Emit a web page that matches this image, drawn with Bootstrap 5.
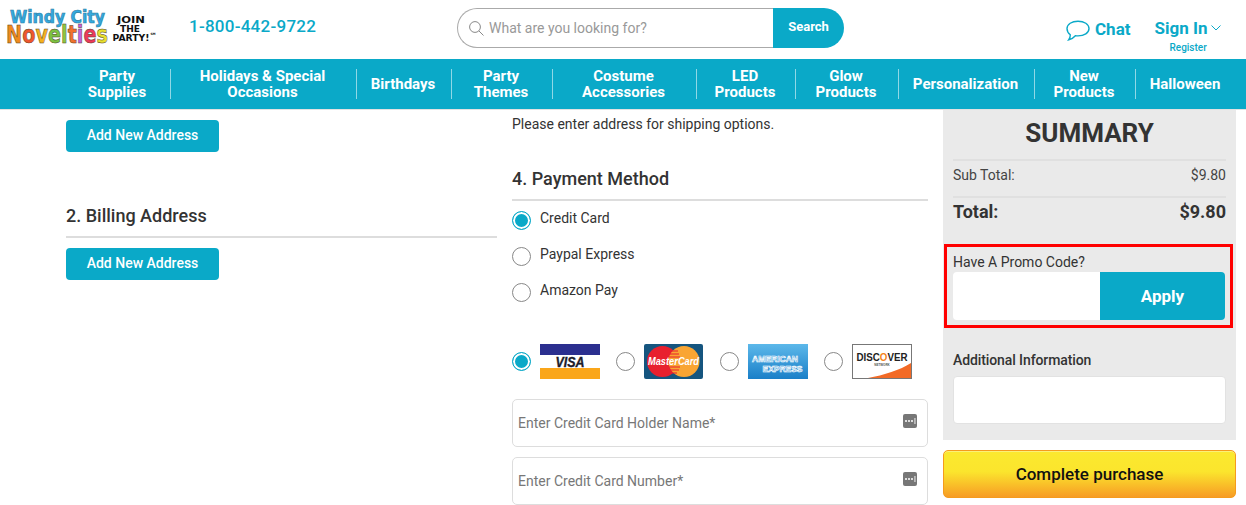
<!DOCTYPE html>
<html lang="en">
<head>
  <meta charset="UTF-8">
  <meta name="viewport" content="width=device-width, initial-scale=1">
  <title>Checkout - Windy City Novelties</title>
  <link href="https://cdn.jsdelivr.net/npm/bootstrap@5.3.0/dist/css/bootstrap.min.css" rel="stylesheet">
  <style>
    html, body { height: 505px; overflow: hidden; }
    body { font-family: Roboto, "Liberation Sans", sans-serif; font-size: 14px; color: #333; background: #fff; }
    .site-top { height: 59px; }
    .brand-logo { margin: -5px 0 0 5px; width: 153px; height: 46px; flex: none; overflow: visible; }
    .phone-link { margin: -6px 0 0 31px; width: 268px; font-size: 17px; font-weight: 500; color: #0aa9c8; text-decoration: none; letter-spacing: .25px; }
    .search-box { width: 387px; height: 40px; flex: none; margin-top: -3px; }
    .search-field { flex: 1; min-width: 0; height: 40px; border: 1px solid #aaa; border-right: 0; border-radius: 20px 0 0 20px; }
    .search-field svg { margin: 0 3px 0 11px; flex: none; }
    .search-field input { border: 0; outline: 0; min-width: 0; flex: 1; font-size: 14px; color: #555; background: transparent; }
    .search-field input::placeholder { color: #999; opacity: 1; }
    .search-go { width: 71px; height: 40px; background: #0aa9c8; color: #fff; font-size: 13px; font-weight: 700; border: 0; border-radius: 0 20px 20px 0; flex: none; padding: 0 0 2px 0; }
    .chat-link { margin-left: 222px; color: #0aa9c8; font-size: 17px; font-weight: 700; text-decoration: none; gap: 5px; margin-top: 1px; }
    .sign-wrap { margin-left: 24px; color: #0aa9c8; margin-top: 13px; width: 70px; }
    .sign-link { font-size: 17px; font-weight: 700; color: #0aa9c8; text-decoration: none; line-height: 20px; gap: 4px; }
    .register-link { display: block; font-size: 10px; font-weight: 500; color: #0aa9c8; text-decoration: none; margin: 4px 0 0 15px; line-height: 12px; }

    .main-nav { height: 50px; background: #0aa9c8; padding: 10px 10px 10px 66px; border-bottom: 0; }
    .main-nav a { display: flex; align-items: center; justify-content: center; text-align: center; height: 30px; padding-right: 2px; color: #fff; font-size: 15px; font-weight: 700; line-height: 16px; text-decoration: none; border-right: 1px solid rgba(255,255,255,.55); }
    .main-nav a:last-child { border-right: 0; }
    .main-nav a:nth-child(1) { width: 105px; }
    .main-nav a:nth-child(2) { width: 186px; }
    .main-nav a:nth-child(3) { width: 95px; }
    .main-nav a:nth-child(4) { width: 101px; }
    .main-nav a:nth-child(5) { width: 144px; }
    .main-nav a:nth-child(6) { width: 99px; }
    .main-nav a:nth-child(7) { width: 103px; }
    .main-nav a:nth-child(8) { width: 136px; }
    .main-nav a:nth-child(9) { width: 101px; }
    .main-nav a:nth-child(10) { width: 100px; }

    .page-body { border-top: 1px solid #e2e2e2; padding-left: 66px; }
    .col-address { width: 431px; padding-top: 10px; flex: none; }
    .col-payment { width: 416px; margin-left: 15px; flex: none; padding-top: 4px; }
    .col-summary { width: 293px; margin-left: 15px; flex: none; }

    .add-btn { display: block; width: 153px; height: 32px; padding: 0 0 1px; background: #0aa9c8; border: 0; border-radius: 4px; color: #fff; font-size: 14px; font-weight: 500; }
    .step-head { font-size: 18px; font-weight: 500; color: #333; line-height: 22px; margin: 0; padding-bottom: 9px; border-bottom: 2px solid #ddd; }
    .billing-head { margin-top: 53px; margin-bottom: 10px; }
    .intro-line { line-height: 20px; margin: 0 0 34px; }
    .pay-head { padding-bottom: 9px; }

    .pay-radio { appearance: none; width: 19px; height: 19px; margin: 0; flex: none; border: 1px solid #888; border-radius: 50%; background: #fff; }
    .pay-radio:checked { background: #0aa9c8; border-color: #0aa9c8; box-shadow: inset 0 0 0 2px #fff; }
    .pay-row { height: 36px; gap: 9px; }
    .pay-row label { line-height: 18px; margin-top: -5px; }
    .pay-row:first-of-type { margin-top: 1px; }
    .card-pick { margin-top: 34px; height: 35px; }
    .card-pick > div { width: 104px; gap: 9px; }
    .card-pick svg { display: block; flex: none; }
    .card-field { margin-top: 10px; height: 48px; }
    .card-field.first-field { margin-top: 20px; }
    .card-field input { width: 100%; height: 48px; border: 1px solid #ddd; border-radius: 5px; padding: 0 5px; font-size: 14px; color: #555; outline: 0; }
    .card-field input::placeholder { color: #777; opacity: 1; }
    .card-field svg { position: absolute; top: 15px; right: 11px; }

    .summary-panel { height: 330px; background: #eaeaea; padding: 0 10px; }
    .summary-title { font-size: 26px; font-weight: 700; line-height: 30px; text-align: center; margin: 0; padding: 8px 0 11px; color: #333; border-bottom: 2px solid #e0e0e0; }
    .sub-line { height: 37px; border-bottom: 2px solid #e0e0e0; font-size: 14px; padding-bottom: 7px; color: #444; }
    .total-line { height: 24px; font-size: 18px; font-weight: 700; margin-bottom: 0; padding-top: 3px; }
    .promo-box { margin: 22px -7px 0 -9px; height: 84px; border: 3px solid #f00; padding: 6px 5px 0 6px; }
    .promo-box label { line-height: 18px; display: block; margin-bottom: 1px; }
    .promo-input { width: 147px; height: 48px; background: #fff; border: 0; border-radius: 4px 0 0 4px; outline: 0; }
    .promo-apply { width: 125px; height: 48px; padding: 1px 0 0; background: #0aa9c8; border: 0; border-radius: 0 4px 4px 0; color: #fff; font-size: 17px; font-weight: 700; }
    .extra-label { font-weight: 500; line-height: 18px; display: block; margin: 23px 0 7px; letter-spacing: -.1px; }
    .extra-input { display: block; width: 100%; height: 48px; background: #fff; border: 1px solid #e2e2e2; border-radius: 4px; outline: 0; resize: none; }
    .buy-btn { display: block; width: 100%; height: 48px; margin-top: 10px; padding: 2px 0 0; border: 1px solid #f59b1d; border-radius: 5px; background: linear-gradient(#fbe92f 0%, #fbe52d 45%, #f79c25 100%); box-shadow: inset 0 1px 0 rgba(255,255,255,.35); color: #111; font-size: 17px; font-weight: 500; }
  </style>
</head>
<body>

<header class="site-top d-flex align-items-center">
  <svg class="brand-logo" viewBox="0 0 153 46" aria-label="Windy City Novelties">
    <g font-family="'DejaVu Sans', sans-serif" font-weight="700">
      <text x="5" y="19" font-size="18" textLength="95" lengthAdjust="spacingAndGlyphs" fill="#33aadf" stroke="#2f7fa6" stroke-width=".7">Windy City</text>
      <text x="1" y="39" font-size="25" textLength="102" lengthAdjust="spacingAndGlyphs" stroke="#4a3a20" stroke-width=".5"><tspan fill="#f08a1c">N</tspan><tspan fill="#f0562e">o</tspan><tspan fill="#f5b01f">v</tspan><tspan fill="#7cc242">e</tspan><tspan fill="#8fc63e">l</tspan><tspan fill="#f0712e">t</tspan><tspan fill="#c45fe0">i</tspan><tspan fill="#ee3a5c">e</tspan><tspan fill="#e8e030">s</tspan></text>
    </g>
    <g font-family="'DejaVu Sans', sans-serif" font-weight="700" font-size="9" fill="#111" text-anchor="middle">
      <text x="126" y="19" textLength="28" lengthAdjust="spacingAndGlyphs">JOIN</text>
      <text x="125" y="28" textLength="20" lengthAdjust="spacingAndGlyphs">THE</text>
      <text x="126" y="37" textLength="37" lengthAdjust="spacingAndGlyphs">PARTY!</text>
      <text x="148" y="31" font-size="3">SM</text>
    </g>
  </svg>
  <a class="phone-link" href="#">1-800-442-9722</a>
  <div class="search-box d-flex">
    <div class="search-field d-flex align-items-center">
      <svg width="15" height="15" viewBox="0 0 15 15" fill="none" stroke="#888" stroke-width="1"><circle cx="6" cy="6" r="5.400"/><path d="M9.900 9.900 14.500 14.500"/></svg>
      <input type="text" placeholder="What are you looking for?">
    </div>
    <button class="search-go" type="button">Search</button>
  </div>
  <a class="chat-link d-flex align-items-center" href="#">
    <svg width="24" height="21" viewBox="0 0 24 21" fill="none" stroke="#0aa9c8" stroke-width="1.4"><path d="M12 1.200c6.200 0 11 3 11 7.400 0 4.300-4.800 7.300-11 7.300-.9 0-1.800-.1-2.600-.2C8 17.300 5.900 19 2.800 19.800c1-1.300 1.500-3 1.500-5C2.200 13.300 1 11.100 1 8.600 1 4.200 5.800 1.200 12 1.200z"/></svg>
    Chat
  </a>
  <div class="sign-wrap">
    <a class="sign-link d-flex align-items-center text-nowrap" href="#">Sign In
      <svg width="10" height="6" viewBox="0 0 10 6" fill="none" stroke="#0aa9c8" stroke-width="1"><path d="M.5.5 5 5 9.500.5"/></svg>
    </a>
    <a class="register-link" href="#">Register</a>
  </div>
</header>

<nav class="main-nav d-flex">
  <a href="#">Party<br>Supplies</a>
  <a href="#">Holidays &amp; Special<br>Occasions</a>
  <a href="#">Birthdays</a>
  <a href="#">Party<br>Themes</a>
  <a href="#">Costume<br>Accessories</a>
  <a href="#">LED<br>Products</a>
  <a href="#">Glow<br>Products</a>
  <a href="#">Personalization</a>
  <a href="#">New<br>Products</a>
  <a href="#">Halloween</a>
</nav>

<main class="page-body d-flex">
  <section class="col-address">
    <button class="add-btn" type="button">Add New Address</button>
    <h2 class="step-head billing-head">2. Billing Address</h2>
    <button class="add-btn" type="button">Add New Address</button>
  </section>

  <section class="col-payment">
    <p class="intro-line">Please enter address for shipping options.</p>
    <h2 class="step-head pay-head">4. Payment Method</h2>
    <div class="pay-row d-flex align-items-center"><input class="pay-radio" type="radio" name="method" id="m1" checked><label for="m1">Credit Card</label></div>
    <div class="pay-row d-flex align-items-center"><input class="pay-radio" type="radio" name="method" id="m2"><label for="m2">Paypal Express</label></div>
    <div class="pay-row d-flex align-items-center"><input class="pay-radio" type="radio" name="method" id="m3"><label for="m3">Amazon Pay</label></div>

    <div class="card-pick d-flex">
      <div class="d-flex align-items-center">
        <input class="pay-radio" type="radio" name="brand" checked>
        <svg width="60" height="35" viewBox="0 0 60 35" aria-label="Visa">
          <rect width="60" height="35" fill="#fff"/>
          <rect width="60" height="11" fill="#2b2f8f"/>
          <rect y="24" width="60" height="11" fill="#faa61a"/>
          <text x="30" y="23" text-anchor="middle" font-family="'Liberation Sans', sans-serif" font-weight="700" font-style="italic" font-size="15" textLength="29" lengthAdjust="spacingAndGlyphs" fill="#1c1c2a" stroke="#1c1c2a" stroke-width=".4">VISA</text>
        </svg>
      </div>
      <div class="d-flex align-items-center">
        <input class="pay-radio" type="radio" name="brand">
        <svg width="59" height="35" viewBox="0 0 59 35" aria-label="MasterCard">
          <rect width="59" height="35" rx="2" fill="#15557f"/>
          <circle cx="18.500" cy="17.500" r="15.500" fill="#e8202e"/>
          <circle cx="40" cy="17.500" r="15.500" fill="#f9a533"/>
          <path d="M25 7h9M24 10h11M23 13h13M23 23h13M24 26h11M26 29h7" stroke="#e8202e" stroke-width="1.200"/>
          <text x="29.500" y="21" text-anchor="middle" font-family="'Liberation Sans', sans-serif" font-weight="700" font-style="italic" font-size="10.500" textLength="51" lengthAdjust="spacingAndGlyphs" fill="#fff">MasterCard</text>
        </svg>
      </div>
      <div class="d-flex align-items-center">
        <input class="pay-radio" type="radio" name="brand">
        <svg width="60" height="35" viewBox="0 0 60 35" aria-label="American Express">
          <defs><linearGradient id="amexFill" x1="0" y1="0" x2="0" y2="1"><stop offset="0" stop-color="#5cb8ea"/><stop offset="1" stop-color="#1a7fc8"/></linearGradient></defs>
          <rect width="60" height="35" fill="url(#amexFill)"/>
          <g font-family="'Liberation Sans', sans-serif" font-weight="700" font-size="9.500" fill="#2b8fd6" stroke="#fff" stroke-width=".7">
            <text x="4" y="17.500" textLength="46" lengthAdjust="spacingAndGlyphs">AMERICAN</text>
            <text x="14.500" y="27.500" textLength="40" lengthAdjust="spacingAndGlyphs">EXPRESS</text>
          </g>
        </svg>
      </div>
      <div class="d-flex align-items-center">
        <input class="pay-radio" type="radio" name="brand">
        <svg width="60" height="35" viewBox="0 0 60 35" aria-label="Discover">
          <rect x=".5" y=".5" width="59" height="34" fill="#fff" stroke="#777"/>
          <path d="M16 34C32 31 48 26 59 19v15z" fill="#f26a26"/>
          <text x="30" y="17" text-anchor="middle" font-family="'Liberation Sans', sans-serif" font-weight="700" font-size="10.500" textLength="51" lengthAdjust="spacingAndGlyphs" fill="#222">DISC<tspan fill="#f58220">O</tspan>VER</text>
          <text x="30" y="22" text-anchor="middle" font-family="'Liberation Sans', sans-serif" font-weight="700" font-size="3" fill="#555">NETWORK</text>
        </svg>
      </div>
    </div>

    <div class="card-field first-field position-relative">
      <input type="text" placeholder="Enter Credit Card Holder Name*">
      <svg width="14" height="14" viewBox="0 0 14 14"><rect width="14" height="14" rx="2" fill="#777"/><g fill="#fff"><circle cx="3" cy="7" r="1"/><circle cx="6" cy="7" r="1"/><circle cx="9" cy="7" r="1"/><rect x="11.500" y="4" width=".9" height="6"/></g></svg>
    </div>
    <div class="card-field position-relative">
      <input type="text" placeholder="Enter Credit Card Number*">
      <svg width="14" height="14" viewBox="0 0 14 14"><rect width="14" height="14" rx="2" fill="#777"/><g fill="#fff"><circle cx="3" cy="7" r="1"/><circle cx="6" cy="7" r="1"/><circle cx="9" cy="7" r="1"/><rect x="11.500" y="4" width=".9" height="6"/></g></svg>
    </div>
  </section>

  <aside class="col-summary">
    <div class="summary-panel">
      <h2 class="summary-title">SUMMARY</h2>
      <div class="sub-line d-flex justify-content-between align-items-center"><span>Sub Total:</span><span>$9.80</span></div>
      <div class="total-line d-flex justify-content-between align-items-center"><span>Total:</span><span>$9.80</span></div>
      <div class="promo-box">
        <label for="promo">Have A Promo Code?</label>
        <div class="d-flex"><input class="promo-input" id="promo" type="text"><button class="promo-apply" type="button">Apply</button></div>
      </div>
      <label class="extra-label" for="extra">Additional Information</label>
      <textarea class="extra-input" id="extra"></textarea>
    </div>
    <button class="buy-btn" type="button">Complete purchase</button>
  </aside>
</main>

<script src="https://cdn.jsdelivr.net/npm/bootstrap@5.3.0/dist/js/bootstrap.bundle.min.js"></script>
</body>
</html>
